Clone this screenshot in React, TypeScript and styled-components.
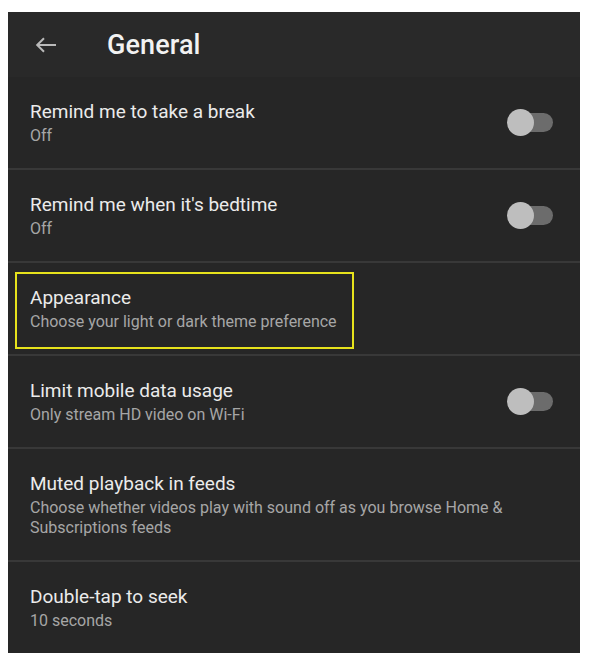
import React from "react";
import styled, { createGlobalStyle } from "styled-components";

const GlobalStyle = createGlobalStyle`
  body {
    margin: 0;
    background: #ffffff;
    font-family: Roboto, "Noto Sans", Arial, sans-serif;
  }
`;

type Setting = {
  title: string;
  sub: string;
  toggle?: boolean;
  marked?: boolean;
};

const settings: Setting[] = [
  { title: "Remind me to take a break", sub: "Off", toggle: true },
  { title: "Remind me when it's bedtime", sub: "Off", toggle: true },
  { title: "Appearance", sub: "Choose your light or dark theme preference", marked: true },
  { title: "Limit mobile data usage", sub: "Only stream HD video on Wi-Fi", toggle: true },
  {
    title: "Muted playback in feeds",
    sub: "Choose whether videos play with sound off as you browse Home & Subscriptions feeds",
  },
  { title: "Double-tap to seek", sub: "10 seconds" },
];

export default function App() {
  return (
    <Page>
      <GlobalStyle />
      <Panel>
        <Header>
          <BackButton aria-label="Back">
            <svg width="22" height="16" viewBox="0 0 22 16" fill="none">
              <path d="M21 8H2.5M9 1.2L2.2 8l6.8 6.8" stroke="#b9b9b9" strokeWidth="2" />
            </svg>
          </BackButton>
          <Title>General</Title>
        </Header>
        {settings.map((s) => (
          <Row key={s.title}>
            {s.marked && <Highlight />}
            <TextBlock>
              <RowTitle>{s.title}</RowTitle>
              <RowSub>{s.sub}</RowSub>
            </TextBlock>
            {s.toggle && <Switch />}
          </Row>
        ))}
      </Panel>
    </Page>
  );
}

const Page = styled.div`
  padding: 12px 0 10px 8px;
`;

const Panel = styled.div`
  width: 572px;
  background: #262626;
  display: flex;
  flex-direction: column;
`;

const Header = styled.div`
  height: 65px;
  background: #292929;
  display: flex;
  align-items: center;
  padding-left: 27px;
  gap: 50px;
`;

const BackButton = styled.span`
  display: flex;
  width: 22px;
  height: 16px;
`;

const Title = styled.h1`
  margin: 0;
  font-size: 27px;
  font-weight: 500;
  color: #f2f2f2;
  letter-spacing: 0.1px;
`;

const Row = styled.div`
  position: relative;
  display: flex;
  align-items: center;
  justify-content: space-between;
  padding: 23px 27px 22px 22px;

  & + & {
    border-top: 2px solid #383838;
  }
`;

const TextBlock = styled.div`
  display: flex;
  flex-direction: column;
  flex: 1;
`;

const RowTitle = styled.div`
  font-size: 19px;
  line-height: 24px;
  color: #ebebeb;
`;

const RowSub = styled.div`
  margin-top: 2px;
  font-size: 16px;
  line-height: 20px;
  color: #a6a6a6;
`;

const Switch = styled.span`
  position: relative;
  width: 46px;
  height: 27px;
  margin-top: -2px;
  flex-shrink: 0;

  &::before {
    content: "";
    position: absolute;
    left: 6px;
    top: 4px;
    width: 40px;
    height: 19px;
    border-radius: 10px;
    background: #6c6c6c;
  }

  &::after {
    content: "";
    position: absolute;
    left: 0;
    top: 0;
    width: 27px;
    height: 27px;
    border-radius: 50%;
    background: #bebebe;
  }
`;

const Highlight = styled.span`
  position: absolute;
  left: 7px;
  top: 9px;
  width: 335px;
  height: 73px;
  border: 2px solid #e6e21c;
  pointer-events: none;
`;
